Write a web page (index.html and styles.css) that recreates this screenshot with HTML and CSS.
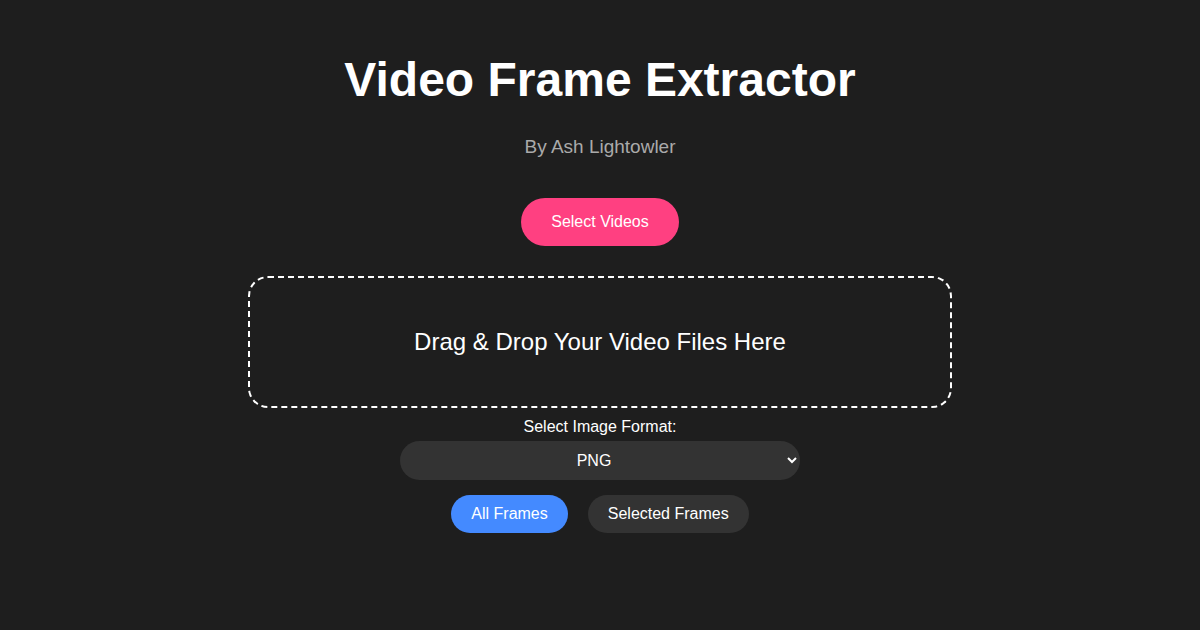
FILE: index.html
```html
<!DOCTYPE html>
<html lang="en">
<head>
  <meta charset="UTF-8">
  <meta name="viewport" content="width=device-width, initial-scale=1.0">
  <title>Video Frame Extractor</title>
  <link rel="stylesheet" href="styles.css">
</head>
<body>
  <div class="container">
    <h1>Video Frame Extractor</h1>
    <p class="author">By Ash Lightowler</p>
    <button type="button" class="select-button">Select Videos</button>
    <div class="drop-area">Drag &amp; Drop Your Video Files Here</div>
    <div class="format">
      <label for="image-format">Select Image Format:</label>
      <select id="image-format">
        <option value="png">PNG</option>
        <option value="jpeg">JPEG</option>
      </select>
    </div>
    <div class="frame-options">
      <button type="button" class="option-button active">All Frames</button>
      <button type="button" class="option-button">Selected Frames</button>
    </div>
  </div>
</body>
</html>
```

FILE: styles.css
```css
* {
  box-sizing: border-box;
}

body {
  font-family: "Liberation Sans", Arial, sans-serif;
  background-color: #1e1e1e;
  color: #fff;
  margin: 0;
  padding: 50px 20px;
  text-align: center;
}

.container {
  display: flex;
  flex-direction: column;
  align-items: center;
}

h1 {
  font-size: 48px;
  line-height: 60px;
  margin: 0 0 26px;
}

.author {
  font-size: 19px;
  line-height: 22px;
  color: #aaa;
  margin: 0 0 40px;
}

button,
select {
  font-family: inherit;
  font-size: 16px;
  color: #fff;
  border: none;
  cursor: pointer;
}

.select-button {
  background-color: #ff4081;
  padding: 15px 30px;
  line-height: 18px;
  border-radius: 30px;
  margin-bottom: 30px;
}

.drop-area {
  width: 100%;
  max-width: 704px;
  padding: 50px;
  font-size: 24px;
  line-height: 28px;
  border: 2px dashed #fff;
  border-radius: 20px;
}

.format {
  display: flex;
  flex-direction: column;
  gap: 5px;
  width: 100%;
  max-width: 400px;
  margin: 10px 0 15px;
}

.format label {
  line-height: 18px;
}

.format select {
  width: 100%;
  padding: 10px;
  background-color: #333;
  border-radius: 20px;
  text-align: center;
}

.frame-options {
  display: flex;
  gap: 20px;
}

.option-button {
  background-color: #333;
  padding: 10px 20px;
  line-height: 18px;
  border-radius: 20px;
}

.option-button.active {
  background-color: #448aff;
}
```
